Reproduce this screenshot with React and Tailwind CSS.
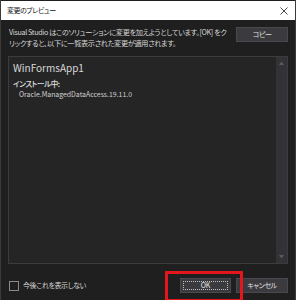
import React from "react";

const font = {
  fontFamily: '"Noto Sans CJK JP", "Noto Sans", sans-serif',
};

export default function App() {
  return (
    <div
      className="relative w-[296px] h-[300px] overflow-hidden bg-[#1f1f1f] border-x border-[#3a3a3a] flex flex-col [font-feature-settings:'palt']"
      style={font}
    >
      {/* title bar */}
      <div className="h-[19px] mt-[1px] bg-white flex items-center justify-between pl-[6px] pr-[6px] shrink-0">
        <span className="text-[7px] tracking-[-0.5px] text-[#111] leading-none">変更のプレビュー</span>
        <svg width="8" height="8" viewBox="0 0 8 8" className="mr-[1px]">
          <path d="M0.5 0.5 L7.5 7.5 M7.5 0.5 L0.5 7.5" stroke="#333" strokeWidth="0.9" fill="none" />
        </svg>
      </div>

      <div className="flex flex-col px-[7px]">
        {/* message */}
        <div className="mt-[7px] flex justify-between items-start">
          <div className="text-[7.2px] tracking-[-0.35px] leading-[11px] text-[#d6d6d6] whitespace-nowrap pl-[1px]">
            Visual Studio はこのソリューションに変更を加えようとしています。[OK] をク
            <br />
            リックすると、以下に一覧表示された変更が適用されます。
          </div>
          <div className="shrink-0 w-[52px] h-[15px] bg-[#3a3a3f] border border-[#48484e] flex items-center justify-center text-[7px] tracking-[-0.4px] text-[#e0e0e0] leading-none">
            コピー
          </div>
        </div>

        {/* panel */}
        <div className="mt-[7px] h-[208px] border border-[#3c3c3e] bg-[#252526] flex">
          <div className="flex-1 flex flex-col pl-[4px] pt-[3px]">
            <div className="text-[10px] leading-[16px] text-[#d8d8d8]">WinFormsApp1</div>
            <div className="mt-[2px] text-[7.5px] tracking-[-0.4px] leading-[11px] text-[#e0e0e0] font-medium">インストール中:</div>
            <div className="pl-[6px] text-[6.9px] leading-[10px] text-[#d0d0d0]">Oracle.ManagedDataAccess.19.11.0</div>
          </div>
          <div className="w-[11px] bg-[#333337] flex flex-col justify-between items-center py-[4px]">
            <svg width="5" height="4" viewBox="0 0 5 4">
              <path d="M0 4 L2.5 0.5 L5 4 Z" fill="#5a5a5e" />
            </svg>
            <svg width="5" height="4" viewBox="0 0 5 4">
              <path d="M0 0 L2.5 3.5 L5 0 Z" fill="#5a5a5e" />
            </svg>
          </div>
        </div>

        {/* bottom row */}
        <div className="mt-[14px] flex items-center">
          <div className="ml-[1px] w-[10px] h-[10px] border border-[#8a8a8a]" />
          <span className="ml-[4px] text-[7px] tracking-[-0.4px] text-[#d6d6d6] leading-none">今後これを表示しない</span>
          <div className="flex-1" />
          <div className="w-[51px] h-[15px] bg-[#3a3a3f] border border-[#48484e] p-[2px]">
            <div className="w-full h-full border border-dotted border-[#bdbdbd] flex items-center justify-center text-[7px] text-[#e6e6e6] leading-none">
              OK
            </div>
          </div>
          <div className="ml-[5px] w-[52px] h-[15px] bg-[#3a3a3f] border border-[#48484e] flex items-center justify-center text-[7px] tracking-[-0.4px] text-[#e0e0e0] leading-none">
            キャンセル
          </div>
        </div>
      </div>

      {/* red highlight annotation */}
      <div className="absolute left-[164px] top-[271px] w-[78px] h-[31px] border-[3px] border-[#e3161d]" />
    </div>
  );
}
